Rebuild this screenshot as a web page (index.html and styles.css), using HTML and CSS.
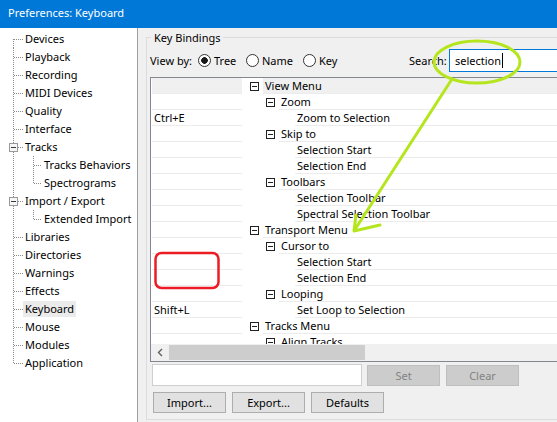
FILE: index.html
```html
<!DOCTYPE html>
<html>
<head>
    <link rel="stylesheet" href="styles.css">
</head>
<body>
<div class="titlebar">Preferences: Keyboard</div>
<div class="main">
    <div class="sidebar" id="pref-tree"></div>
    <div class="content">
        <fieldset class="bindings">
            <legend>Key Bindings</legend>
            <div class="view-row">
                <span class="view-label">View by:</span>
                <span class="radio-option opt-tree"><span class="radio checked"></span>Tree</span>
                <span class="radio-option opt-name"><span class="radio"></span>Name</span>
                <span class="radio-option opt-key"><span class="radio"></span>Key</span>
                <span class="search-label">Search:</span>
                <div class="search-box">selection<span class="caret"></span></div>
            </div>
            <div class="key-list">
                <div class="key-rows" id="key-rows"></div>
                <div class="hscroll">
                    <div class="hscroll-arrow">
                        <svg width="8" height="9" viewBox="0 0 8 9"><polyline points="6,1 2.5,4.5 6,8" fill="none" stroke="#606060" stroke-width="1.4"/></svg>
                    </div>
                    <div class="hscroll-thumb"></div>
                </div>
            </div>
            <div class="edit-row">
                <div class="key-input"></div>
                <button class="btn btn-set disabled">Set</button>
                <button class="btn btn-clear disabled">Clear</button>
            </div>
            <div class="button-row">
                <button class="btn">Import...</button>
                <button class="btn">Export...</button>
                <button class="btn">Defaults</button>
            </div>
        </fieldset>
    </div>
</div>

<svg class="markup" width="557" height="422">
    <ellipse cx="477" cy="62" rx="43" ry="21" fill="none" stroke="#b5e61d" stroke-width="3"/>
    <path d="M452 79 L354 231 L356 215 M354 231 L380 225" fill="none" stroke="#b5e61d" stroke-width="3" stroke-linecap="round" stroke-linejoin="round"/>
    <rect x="155.5" y="253" width="63" height="35" rx="6" fill="none" stroke="#ed1c24" stroke-width="2.5"/>
</svg>

<script>
    var prefPages = [
        { name: "Devices", level: 0 },
        { name: "Playback", level: 0 },
        { name: "Recording", level: 0 },
        { name: "MIDI Devices", level: 0 },
        { name: "Quality", level: 0 },
        { name: "Interface", level: 0 },
        { name: "Tracks", level: 0, open: true },
        { name: "Tracks Behaviors", level: 1 },
        { name: "Spectrograms", level: 1 },
        { name: "Import / Export", level: 0, open: true },
        { name: "Extended Import", level: 1 },
        { name: "Libraries", level: 0 },
        { name: "Directories", level: 0 },
        { name: "Warnings", level: 0 },
        { name: "Effects", level: 0 },
        { name: "Keyboard", level: 0, selected: true },
        { name: "Mouse", level: 0 },
        { name: "Modules", level: 0 },
        { name: "Application", level: 0 }
    ];

    var bindings = [
        { label: "View Menu", level: 0, parent: true, selected: true },
        { label: "Zoom", level: 1, parent: true },
        { label: "Zoom to Selection", level: 2, key: "Ctrl+E" },
        { label: "Skip to", level: 1, parent: true },
        { label: "Selection Start", level: 2 },
        { label: "Selection End", level: 2 },
        { label: "Toolbars", level: 1, parent: true },
        { label: "Selection Toolbar", level: 2 },
        { label: "Spectral Selection Toolbar", level: 2 },
        { label: "Transport Menu", level: 0, parent: true },
        { label: "Cursor to", level: 1, parent: true },
        { label: "Selection Start", level: 2 },
        { label: "Selection End", level: 2 },
        { label: "Looping", level: 1, parent: true },
        { label: "Set Loop to Selection", level: 2, key: "Shift+L" },
        { label: "Tracks Menu", level: 0, parent: true },
        { label: "Align Tracks", level: 1, parent: true }
    ];

    function dotted(x1, y1, x2, y2) {
        return '<line x1="' + x1 + '" y1="' + y1 + '" x2="' + x2 + '" y2="' + y2 +
            '" stroke="#8a8a8a" stroke-width="1" stroke-dasharray="1 1"/>';
    }

    function guideFor(i) {
        var page = prefPages[i];
        var next = prefPages[i + 1];
        var width = page.level == 0 ? 23 : 42;
        var lines = "";

        var top = i == 0 ? 9 : 0;
        var lastTop = !next;
        if (page.level == 0) {
            lines += dotted(13.5, top, 13.5, lastTop ? 9 : 18);
            lines += dotted(14, 9.5, 23, 9.5);
            if (page.open) {
                lines += '<rect x="9.5" y="5.5" width="8" height="8" fill="#f6f6f6" stroke="#9a9a9a"/>';
                lines += '<line x1="11" y1="9.5" x2="16" y2="9.5" stroke="#3a3a3a"/>';
            }
        } else {
            var lastChild = !next || next.level == 0;
            lines += dotted(13.5, 0, 13.5, 18);
            lines += dotted(33.5, 0, 33.5, lastChild ? 9 : 18);
            lines += dotted(34, 9.5, 42, 9.5);
        }

        return '<svg width="' + width + '" height="18">' + lines + '</svg>';
    }

    function displayPrefTree() {
        var tree = document.getElementById("pref-tree");
        for (var i = 0; i < prefPages.length; i++) {
            var row = document.createElement("div");
            row.className = "pref-row";
            row.innerHTML = guideFor(i);

            var label = document.createElement("span");
            label.className = prefPages[i].selected ? "pref-label selected" : "pref-label";
            label.textContent = prefPages[i].name;
            row.appendChild(label);

            tree.appendChild(row);
        }
    }

    function displayBindings() {
        var rows = document.getElementById("key-rows");
        for (var i = 0; i < bindings.length; i++) {
            var item = bindings[i];

            var row = document.createElement("div");
            row.className = item.selected ? "key-row selected" : "key-row";

            var keyCell = document.createElement("div");
            keyCell.className = "key-cell";
            keyCell.textContent = item.key || "";

            var indent = document.createElement("div");
            indent.className = "tree-indent";
            indent.style.width = (21 + item.level * 16) + "px";
            if (item.parent) {
                var box = document.createElement("span");
                box.className = "expander";
                indent.appendChild(box);
            }

            var label = document.createElement("div");
            label.className = "tree-label";
            label.textContent = item.label;

            row.appendChild(keyCell);
            row.appendChild(indent);
            row.appendChild(label);
            rows.appendChild(row);
        }
    }

    displayPrefTree();
    displayBindings();
</script>
</body>
</html>
```

FILE: styles.css
```css
body {
    margin: 0;
    width: 557px;
    height: 422px;
    overflow: hidden;
    position: relative;
    background-color: #f0f0f0;
    font-family: "Noto Sans", sans-serif;
    font-size: 11px;
    color: #000;
}

.titlebar {
    height: 28px;
    line-height: 26px;
    padding-left: 8px;
    background-color: #0078d7;
    color: #fff;
}

.main {
    display: flex;
    height: 394px;
}

/* page tree on the left */

.sidebar {
    flex: none;
    width: 137px;
    padding-top: 2px;
    background-color: #fff;
    border-right: 1px solid #a0a0a0;
}

.pref-row {
    display: flex;
    align-items: center;
    height: 18px;
}

.pref-row svg {
    flex: none;
}

.pref-label {
    padding: 0 2px;
    line-height: 16px;
    white-space: nowrap;
}

.pref-label.selected {
    background-color: #ebebeb;
}

/* key bindings group */

.content {
    flex: 1;
    overflow: hidden;
    padding: 2px 0 0 8px;
}

.bindings {
    box-sizing: border-box;
    width: 490px;
    height: 390px;
    margin: 0;
    padding: 0 0 0 3px;
    border: 1px solid #dcdcdc;
}

.bindings legend {
    margin-left: 1px;
    padding: 0 3px;
    line-height: 15px;
}

.view-row {
    display: flex;
    align-items: center;
    height: 23px;
    margin-top: 4px;
    white-space: nowrap;
}

.view-label {
    width: 48px;
}

.radio-option {
    display: flex;
    align-items: center;
}

.opt-tree {
    width: 48px;
}

.opt-name {
    width: 57px;
}

.opt-key {
    width: 106px;
}

.radio {
    box-sizing: border-box;
    width: 13px;
    height: 13px;
    margin-right: 3px;
    border: 1px solid #333;
    border-radius: 50%;
    background-color: #fff;
}

.radio.checked {
    background: radial-gradient(circle, #1a1a1a 3px, #fff 3.6px);
}

.search-label {
    width: 40px;
}

.search-box {
    box-sizing: border-box;
    flex: none;
    display: flex;
    align-items: center;
    width: 170px;
    height: 23px;
    padding-left: 5px;
    border: 1px solid #0078d7;
    background-color: #fff;
}

.caret {
    width: 1px;
    height: 15px;
    margin-left: 1px;
    background-color: #000;
}

.key-list {
    margin-top: 5px;
    border: 1px solid #828790;
    background-color: #fff;
}

.key-rows {
    height: 266px;
    overflow: hidden;
}

.key-row {
    display: flex;
    height: 16px;
    line-height: 15px;
    white-space: nowrap;
}

.key-cell {
    box-sizing: border-box;
    flex: none;
    width: 90px;
    margin-left: 1px;
    padding-left: 2px;
    border-bottom: 1px solid #ececec;
}

.tree-indent {
    box-sizing: border-box;
    flex: none;
    display: flex;
    align-items: center;
    justify-content: flex-end;
    padding-right: 4px;
}

.expander {
    box-sizing: border-box;
    width: 9px;
    height: 9px;
    border: 1px solid #222;
    background: linear-gradient(#222, #222) center / 5px 1px no-repeat;
}

.tree-label {
    flex: 1;
    padding-left: 2px;
    border-bottom: 1px solid #ececec;
}

.key-row.selected .key-cell,
.key-row.selected .tree-label {
    background-color: #f0f0f0;
}

.hscroll {
    display: flex;
    height: 17px;
    background-color: #f0f0f0;
}

.hscroll-arrow {
    display: flex;
    align-items: center;
    justify-content: center;
    width: 17px;
}

.hscroll-thumb {
    width: 196px;
    margin: 1px 0 1px 1px;
    background-color: #cdcdcd;
}

.edit-row {
    display: flex;
    align-items: flex-start;
    margin-top: 2px;
}

.key-input {
    box-sizing: border-box;
    width: 210px;
    height: 22px;
    margin-left: 2px;
    border: 1px solid #cfcfcf;
    background-color: #fff;
}

.btn {
    box-sizing: border-box;
    width: 73px;
    height: 21px;
    margin: 0;
    padding: 0;
    border: 1px solid #adadad;
    background-color: #e1e1e1;
    font: inherit;
    color: #000;
}

.btn.disabled {
    background-color: #cccccc;
    border-color: #bfbfbf;
    color: #838383;
}

.btn-set {
    margin: 1px 0 0 5px;
}

.btn-clear {
    margin: 1px 0 0 6px;
}

.button-row {
    display: flex;
    gap: 6px;
    margin-top: 6px;
    padding-left: 3px;
}

/* hand-drawn annotations over the dialog */

.markup {
    position: absolute;
    top: 0;
    left: 0;
    pointer-events: none;
}
```
